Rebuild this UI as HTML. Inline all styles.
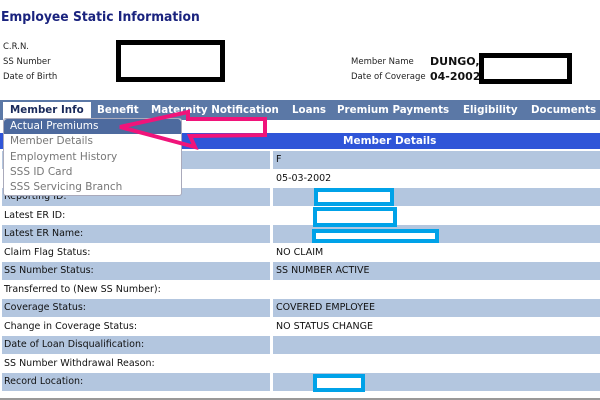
<!DOCTYPE html>
<html><head><style>
*{margin:0;padding:0;box-sizing:border-box}
body{width:600px;height:400px;background:#fff;font-family:"DejaVu Sans",Verdana,sans-serif;position:relative;overflow:hidden;color:#111}
.a{position:absolute}
.s{font-size:8.5px;color:#222}
.row{position:absolute;left:2px;width:598px;height:18px;font-size:9.5px;line-height:18px}
.row .l{position:absolute;left:0;width:268px;height:18px;padding-left:2px}
.row .v{position:absolute;left:271px;right:0;height:18px;padding-left:3px}
.b .l,.b .v{background:#b3c6df}
.nav{position:absolute;left:0;top:100px;width:600px;height:20px;background:#5b78a6;font-weight:bold;font-size:10.5px;color:#fff;line-height:20px}
.nav span{position:absolute;top:0;transform:scaleX(0.98);transform-origin:left center;white-space:nowrap}
.blue{position:absolute;border:4px solid #00a2e8;background:#fff}
</style></head><body>
<div class="a" style="left:1px;top:10px;font-size:13px;font-weight:bold;color:#1a237e;transform:scaleX(0.95);transform-origin:left;white-space:nowrap">Employee Static Information</div>
<div class="a s" style="left:3px;top:42px">C.R.N.</div>
<div class="a s" style="left:3px;top:57px">SS Number</div>
<div class="a s" style="left:3px;top:72px">Date of Birth</div>
<div class="a" style="left:116px;top:40px;width:109px;height:42px;border:5px solid #000"></div>
<div class="a s" style="left:351px;top:57px">Member Name</div>
<div class="a s" style="left:351px;top:72px">Date of Coverage</div>
<div class="a" style="left:430px;top:55px;font-size:11px;font-weight:bold">DUNGO,</div>
<div class="a" style="left:430px;top:70px;font-size:11px;font-weight:bold">04-2002</div>
<div class="a" style="left:479px;top:53px;width:93px;height:31px;border:5px solid #000"></div>
<div class="nav">
<div style="position:absolute;left:3px;top:2px;width:88px;height:18px;background:#fff"></div>
<span style="left:10px;color:#1a2a5a">Member Info</span>
<span style="left:97px">Benefit</span>
<span style="left:151px">Maternity Notification</span>
<span style="left:292px">Loans</span>
<span style="left:337px">Premium Payments</span>
<span style="left:463px">Eligibility</span>
<span style="left:531px">Documents</span>
</div>
<div class="a" style="left:0;top:133px;width:600px;height:16px;background:#2f55d8;color:#fff;font-weight:bold;font-size:10.5px;line-height:16px;padding-left:343px">Member Details</div>
<div class="row b" style="top:151px"><div class="l"></div><div class="v">F</div></div>
<div class="row" style="top:170px"><div class="l"></div><div class="v">05-03-2002</div></div>
<div class="row b" style="top:188px"><div class="l">Reporting ID:</div><div class="v"></div></div>
<div class="row" style="top:207px"><div class="l">Latest ER ID:</div><div class="v"></div></div>
<div class="row b" style="top:225px"><div class="l">Latest ER Name:</div><div class="v"></div></div>
<div class="row" style="top:244px"><div class="l">Claim Flag Status:</div><div class="v">NO CLAIM</div></div>
<div class="row b" style="top:262px"><div class="l">SS Number Status:</div><div class="v">SS NUMBER ACTIVE</div></div>
<div class="row" style="top:281px"><div class="l">Transferred to (New SS Number):</div><div class="v"></div></div>
<div class="row b" style="top:299px"><div class="l">Coverage Status:</div><div class="v">COVERED EMPLOYEE</div></div>
<div class="row" style="top:318px"><div class="l">Change in Coverage Status:</div><div class="v">NO STATUS CHANGE</div></div>
<div class="row b" style="top:336px"><div class="l">Date of Loan Disqualification:</div><div class="v"></div></div>
<div class="row" style="top:355px"><div class="l">SS Number Withdrawal Reason:</div><div class="v"></div></div>
<div class="row b" style="top:373px"><div class="l">Record Location:</div><div class="v"></div></div>
<div class="a" style="left:0;top:398px;width:600px;height:2px;background:#999"></div>
<div class="blue" style="left:314px;top:188px;width:80px;height:18px"></div>
<div class="blue" style="left:313px;top:207px;width:84px;height:20px"></div>
<div class="blue" style="left:312px;top:229px;width:127px;height:14px"></div>
<div class="blue" style="left:313px;top:374px;width:52px;height:18px"></div>
<div class="a" style="left:3px;top:118px;width:179px;height:78px;background:#fff;border:1px solid #aab;border-radius:3px;font-size:10.5px;color:#777;line-height:15.3px">
<div style="background:#4d6a9e;color:#fff;padding-left:6px;border-radius:3px 3px 0 0">Actual Premiums</div>
<div style="padding-left:6px">Member Details</div>
<div style="padding-left:6px">Employment History</div>
<div style="padding-left:6px">SSS ID Card</div>
<div style="padding-left:6px">SSS Servicing Branch</div>
</div>
<svg class="a" style="left:0;top:0" width="600" height="400"><polygon points="120,127 188,112 188,119 265,119 265,135 190,136 195,147" fill="none" stroke="#f0147a" stroke-width="4" stroke-linejoin="miter"/></svg>
</body></html>
